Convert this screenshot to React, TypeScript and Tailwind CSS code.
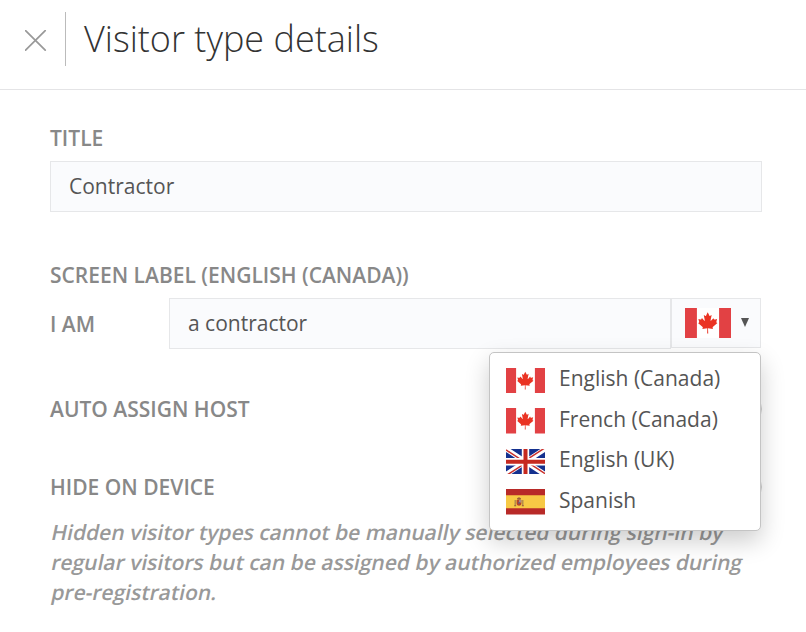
import React from 'react';

const LEAF =
  'M201 232l-13.3 4.4 61.4 54c4.7 13.7-1.6 17.8-5.6 25l66.6-8.4-1.6 67 13.9-.3-3.1-66.6 66.7 8c-4.1-8.7-7.8-13.3-4-27.2l61.3-51-10.7-4c-8.8-6.8 3.8-32.6 5.6-48.9 0 0-35.7 12.3-38 5.8l-9.2-17.5-32.6 35.8c-3.5.9-5-.5-5.9-3.5l15-74.8-23.8 13.4c-2 .9-4 .1-5.2-2.2l-23-46-23.6 47.8c-1.8 1.7-3.6 1.9-5 .7L264 130.8l13.7 74.1c-1.1 3-3.7 3.8-6.7 2.2l-31.2-35.3c-4 6.5-6.8 17.1-12.2 19.5-5.4 2.3-23.5-4.5-35.6-7 4.2 14.8 17 39.6 9 47.7z';

type FlagProps = { className?: string };

const CanadaFlag: React.FC<FlagProps> = ({ className }) => (
  <svg viewBox="0 0 39 25.5" preserveAspectRatio="none" className={className}>
    <path fill="#fff" d="M0 0h39v25.5H0z" />
    <path fill="#e24144" d="M0 0h10.1v25.5H0zM28.9 0H39v25.5H28.9z" />
    <path fill="#ea3323" transform="translate(-1.1 -2.5) scale(.0645)" d={LEAF} />
  </svg>
);

const UkFlag: React.FC<FlagProps> = ({ className }) => (
  <svg viewBox="0 0 39 25.5" preserveAspectRatio="none" className={className}>
    <path fill="#15318f" d="M0 0h39v25.5H0z" />
    <path stroke="#fff" strokeWidth="5" d="M0 0l39 25.5M39 0L0 25.5" />
    <path stroke="#c9302c" strokeWidth="1.5" d="M0 .9l18 11.8M39 24.6L21 12.8M38.4-.8L20 11.2M.6 26.3L19 14.3" />
    <path stroke="#fff" strokeWidth="7.4" d="M19.5 0v25.5M0 12.75h39" />
    <path stroke="#c6291f" strokeWidth="4" d="M19.5 0v25.5M0 12.75h39" />
  </svg>
);

const SpainFlag: React.FC<FlagProps> = ({ className }) => (
  <svg viewBox="0 0 39 25.5" preserveAspectRatio="none" className={className}>
    <path fill="#b82a28" d="M0 0h39v25.5H0z" />
    <path fill="#f7c945" d="M0 6.2h39v13.1H0z" />
    <path fill="#a5804a" d="M8.6 11h1.2v6H8.6zM16.2 11h1.2v6h-1.2z" />
    <path fill="#9b5a3c" d="M11 9.2l2-1 2 1-.4 1.6h-3.2zM8.2 16.2h2v1h-2zM15.8 16.2h2v1h-2z" />
    <path fill="#b4442c" d="M10.6 11h4.8v3.6c0 3-4.8 3-4.8 0z" />
    <path fill="#a98d86" d="M13 11h2.4v2.6H13z" />
    <circle cx="13" cy="13.8" r=".9" fill="#5b5f86" />
  </svg>
);

const languages = [
  { name: 'English (Canada)', Flag: CanadaFlag },
  { name: 'French (Canada)', Flag: CanadaFlag },
  { name: 'English (UK)', Flag: UkFlag },
  { name: 'Spanish', Flag: SpainFlag },
];

const hint = [
  'Hidden visitor types cannot be manually selected during sign-in by',
  'regular visitors but can be assigned by authorized employees during',
  'pre-registration.',
];

const Label: React.FC<{ children: React.ReactNode }> = ({ children }) => (
  <span className="text-[21px] leading-[28px] font-semibold text-[#888]">{children}</span>
);

const Toggle: React.FC = () => (
  <span className="h-[26px] w-[50px] rounded-full border border-[#d0d0d0] bg-[#f4f4f4]" />
);

const App: React.FC = () => {
  return (
    <div className="h-[632px] w-[806px] overflow-hidden bg-white font-['Open_Sans','Noto_Sans',sans-serif]">
      <header className="flex h-[90px] items-start border-b border-[#e4e4e6] pt-3 pl-[25px]">
        <button type="button" aria-label="Close" className="mt-[18px]">
          <svg viewBox="0 0 22 22" className="size-[22px]" fill="none" stroke="#999" strokeWidth="1.7" strokeLinecap="round">
            <path d="M.6.6l19.6 19.6M20.2.6L.6 20.2" />
          </svg>
        </button>
        <div className="ml-[18px] h-[54px] w-px bg-[#bbb]" />
        <h1 className="ml-[18px] text-[36px] leading-[54px] font-light text-[#333]">Visitor type details</h1>
      </header>

      <main className="flex flex-col pt-[34px] pr-11 pl-[50px]">
        <Label>TITLE</Label>
        <div className="mt-[9px] flex h-[51px] items-center border border-[#e6e7e9] bg-[#fafbfd] px-[18px] text-[21px] text-[#555]">
          Contractor
        </div>

        <div className="mt-[49px] flex">
          <Label>SCREEN LABEL (ENGLISH (CANADA))</Label>
        </div>
        <div className="mt-[9px] flex h-[51px]">
          <div className="flex w-[119px] items-center">
            <Label>I AM</Label>
          </div>
          <div className="flex w-[502px] items-center border border-[#e6e7e9] bg-[#fafbfd] px-[18px] text-[21px] text-[#555]">
            a contractor
          </div>
          <div className="relative h-[50px] w-[90px]">
            <button type="button" className="flex h-full w-full items-center border border-[#e6e7e9] bg-[#fafbfd] pl-[13px]">
              <CanadaFlag className="h-[30px] w-[46px]" />
              <svg viewBox="0 0 8 9" className="mb-px ml-[10px] h-[9px] w-2 fill-[#555]">
                <path d="M0 0h8L4 9z" />
              </svg>
            </button>
            <ul className="absolute top-[54px] right-0 z-10 h-[179px] w-[272px] rounded-[5px] border border-[#c4c4c4] bg-white pt-[5.5px] pl-4 shadow-[0_10px_24px_rgba(0,0,0,0.2)]">
              {languages.map(({ name, Flag }) => (
                <li key={name} className="flex h-[40.5px] items-center text-[21px] text-[#555]">
                  <Flag className="mt-[3px] h-[25.5px] w-[39px]" />
                  <span className="ml-[14px]">{name}</span>
                </li>
              ))}
            </ul>
          </div>
        </div>

        <div className="mt-[46px] flex items-center justify-between">
          <Label>AUTO ASSIGN HOST</Label>
          <Toggle />
        </div>
        <div className="mt-[50px] flex items-center justify-between">
          <Label>HIDE ON DEVICE</Label>
          <Toggle />
        </div>
        {/* slanted upright face, each line skewed on its own so the left edge stays straight */}
        <p className="mt-4 pl-[1.5px] text-[21px] leading-[30px] font-semibold whitespace-nowrap text-[#999]">
          {hint.map((line) => (
            <span key={line} className="block -skew-x-12">
              {line}
            </span>
          ))}
        </p>
      </main>
    </div>
  );
};

export default App;
